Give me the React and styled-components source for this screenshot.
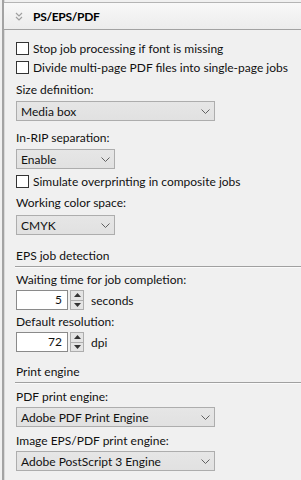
import styled, { createGlobalStyle } from 'styled-components';

const GlobalStyle = createGlobalStyle`
  html, body {
    margin: 0;
    padding: 0;
    background: #f0f0f0;
  }
  body {
    font-family: Lato, 'Open Sans', sans-serif;
    font-size: 12px;
    color: #111;
  }
`;

const Frame = styled.div`
  width: 301px;
  height: 480px;
  overflow: hidden;
  padding: 0 0 0 2px;
  box-sizing: border-box;
`;

const Panel = styled.div`
  height: 100%;
  border-left: 2px solid #a3a3a3;
  box-shadow: inset 1px 0 0 #d9d9d9;
  padding-top: 2px;
  box-sizing: border-box;
`;

const Header = styled.div`
  display: flex;
  align-items: center;
  height: 26px;
  border-top: 1px solid #b4b4b4;
  border-bottom: 1px solid #a2a2a2;
  background: linear-gradient(#f8f8f8, #ececec);
  padding-left: 11px;
  gap: 10px;
  font-weight: 700;
  font-size: 12px;
  letter-spacing: -0.3px;
  color: #000;
`;

const Group = styled.div`
  padding: ${(p) => p.$pad || 0}px 0 0 ${(p) => (p.$rule ? 11 : 12)}px;
`;

const CheckRow = styled.label`
  display: flex;
  align-items: center;
  height: 19px;
  gap: 4px;
  margin-top: ${(p) => p.$top || 0}px;
  white-space: nowrap;
`;

const Box = styled.span`
  width: 11px;
  height: 11px;
  border: 1px solid #333;
  background: #fff;
  flex: none;
`;

const Label = styled.div`
  height: 16px;
  line-height: 16px;
  margin-top: ${(p) => p.$top || 0}px;
  white-space: nowrap;
`;

const Combo = styled.div`
  display: flex;
  align-items: center;
  justify-content: space-between;
  box-sizing: border-box;
  width: ${(p) => p.$width}px;
  height: 20px;
  margin-top: ${(p) => p.$top || 3}px;
  padding: 0 4px 0 4px;
  border: 1px solid #adadad;
  background: linear-gradient(#e6e6e6, #e1e1e1);
`;

const Section = styled.div`
  height: 16px;
  line-height: 16px;
  margin-top: ${(p) => p.$top}px;
  padding: 0 0 2px 1px;
  border-bottom: 1px solid #a0a0a0;
  box-shadow: 0 1px 0 #fafafa;
`;

const SpinRow = styled.div`
  display: flex;
  align-items: center;
  margin-top: ${(p) => p.$top || 2}px;
  height: 20px;
`;

const NumberBox = styled.div`
  box-sizing: border-box;
  width: 52px;
  height: 20px;
  border: 1px solid #8a8a8a;
  background: #fff;
  text-align: right;
  padding-right: 5px;
  line-height: 18px;
`;

const Spinner = styled.div`
  display: flex;
  flex-direction: column;
  width: 14px;
  height: 20px;
  margin-left: 2px;
  box-sizing: border-box;
  border: 1px solid #adadad;
  background: #e4e4e4;
`;

const SpinHalf = styled.div`
  flex: 1;
  display: flex;
  align-items: center;
  justify-content: center;
  border-top: ${(p) => (p.$down ? '1px solid #adadad' : 'none')};
`;

const Unit = styled.span`
  margin-left: 7px;
`;

const Chevron = () => (
  <svg width="9" height="5" viewBox="0 0 9 5">
    <polyline points="0.5,0.5 4.5,4.5 8.5,0.5" fill="none" stroke="#606060" strokeWidth="1" />
  </svg>
);

const Collapse = () => (
  <svg width="8" height="9" viewBox="0 0 8 9">
    <polyline points="1,1 4,4 7,1" fill="none" stroke="#a0a0a0" strokeWidth="1.2" />
    <polyline points="1,5 4,8 7,5" fill="none" stroke="#a0a0a0" strokeWidth="1.2" />
  </svg>
);

const Arrow = ({ down }) => (
  <svg width="7" height="4" viewBox="0 0 7 4">
    <polygon points={down ? '0,0 7,0 3.5,4' : '0,4 7,4 3.5,0'} fill="#333" />
  </svg>
);

const Select = ({ value, width, top }) => (
  <Combo $width={width} $top={top}>
    <span>{value}</span>
    <Chevron />
  </Combo>
);

const Check = ({ children, top }) => (
  <CheckRow $top={top}>
    <Box />
    {children}
  </CheckRow>
);

const Spin = ({ value, unit, top }) => (
  <SpinRow $top={top}>
    <NumberBox>{value}</NumberBox>
    <Spinner>
      <SpinHalf>
        <Arrow />
      </SpinHalf>
      <SpinHalf $down>
        <Arrow down />
      </SpinHalf>
    </Spinner>
    <Unit>{unit}</Unit>
  </SpinRow>
);

export default function App() {
  return (
    <>
      <GlobalStyle />
      <Frame>
        <Panel>
          <Header>
            <Collapse />
            PS/EPS/PDF
          </Header>
          <Group $pad={9}>
            <Check>Stop job processing if font is missing</Check>
            <Check>Divide multi-page PDF files into single-page jobs</Check>
            <Label $top={5}>Size definition:</Label>
            <Select value="Media box" width={199} />
            <Label $top={9}>In-RIP separation:</Label>
            <Select value="Enable" width={99} />
            <Check top={3}>Simulate overprinting in composite jobs</Check>
            <Label $top={4}>Working color space:</Label>
            <Select value="CMYK" width={99} top={4} />
          </Group>
          <Group $rule>
            <Section $top={13}>EPS job detection</Section>
          </Group>
          <Group>
            <Label $top={5}>Waiting time for job completion:</Label>
            <Spin value="5" unit="seconds" />
            <Label $top={4}>Default resolution:</Label>
            <Spin value="72" unit="dpi" top={2} />
          </Group>
          <Group $rule>
            <Section $top={12}>Print engine</Section>
          </Group>
          <Group>
            <Label $top={6}>PDF print engine:</Label>
            <Select value="Adobe PDF Print Engine" width={199} top={2} />
            <Label $top={6}>Image EPS/PDF print engine:</Label>
            <Select value="Adobe PostScript 3 Engine" width={199} top={2} />
          </Group>
        </Panel>
      </Frame>
    </>
  );
}
